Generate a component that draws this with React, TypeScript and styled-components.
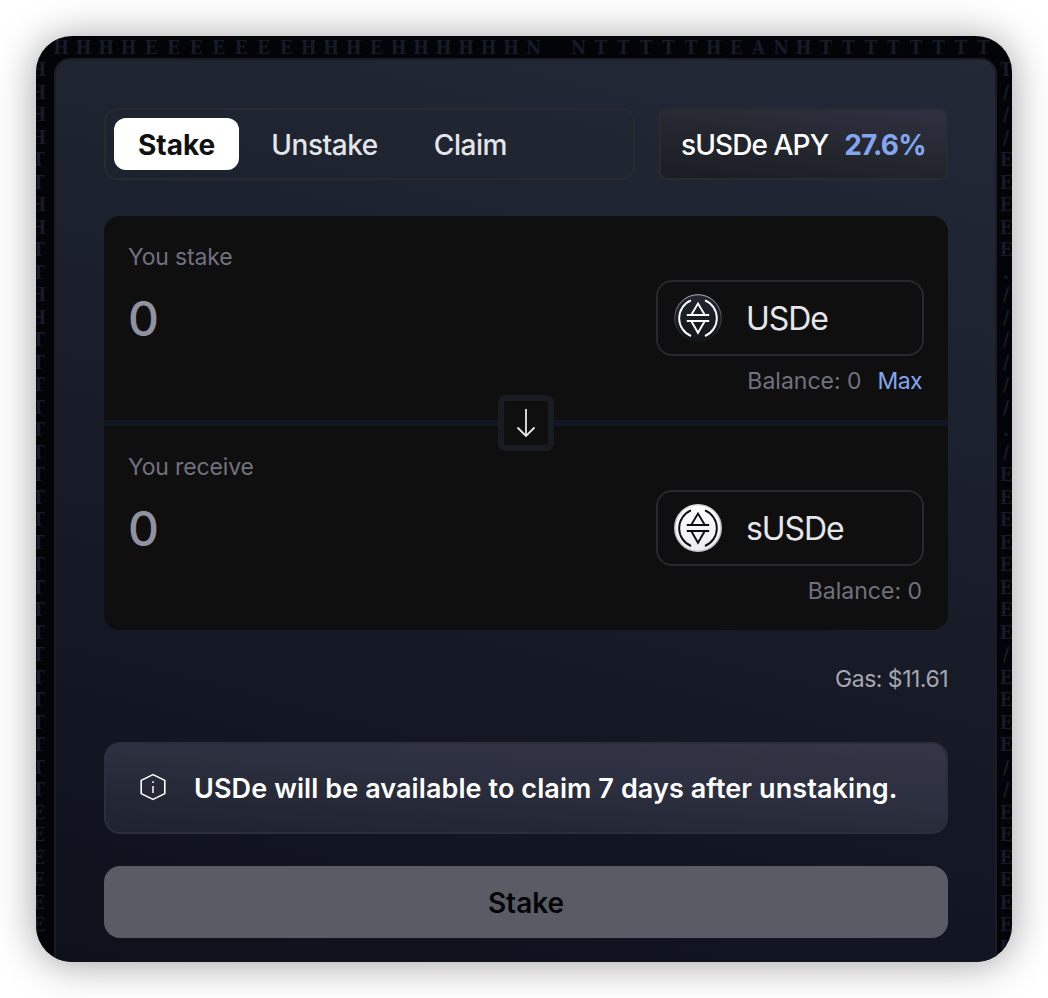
import styled, { createGlobalStyle, css } from "styled-components";

const GlobalStyle = createGlobalStyle`
  * {
    box-sizing: border-box;
  }
  body {
    margin: 0;
    background: #ffffff;
    font-family: Inter, "Liberation Sans", sans-serif;
  }
  button {
    font-family: inherit;
    border: none;
    background: none;
    padding: 0;
    cursor: pointer;
  }
`;

const Page = styled.div`
  width: 1048px;
  height: 998px;
  padding: 36px;
  overflow: hidden;
`;

const Frame = styled.div`
  display: grid;
  grid-template-columns: 18px 943px 15px;
  grid-template-rows: 22px 904px;
  width: 976px;
  height: 926px;
  border-radius: 36px;
  overflow: hidden;
  background: #030407;
  box-shadow: 0 2px 40px rgba(0, 0, 0, 0.38);
`;

const GlyphStrip = styled.div<{
  $vertical?: boolean;
  $start: number;
}>`
  display: flex;
  overflow: hidden;
  ${({ $vertical, $start }) =>
    $vertical
      ? css`
          flex-direction: column;
          padding-top: 1px;
          & > span {
            margin-left: ${$start}px;
          }
        `
      : css`
          grid-column: 1 / -1;
          padding-top: 1px;
          padding-left: ${$start}px;
        `}
`;

const Glyph = styled.span`
  flex: none;
  width: 22.5px;
  height: 22.5px;
  font-family: "DejaVu Serif Condensed", "DejaVu Serif", serif;
  font-stretch: condensed;
  font-weight: 700;
  font-size: 18.5px;
  line-height: 22.5px;
  text-align: center;
  color: #171b29;
  white-space: pre;
`;

const Panel = styled.main`
  display: flex;
  flex-direction: column;
  padding: 48px 47px 0 48px;
  border: 2px solid #1b1d22;
  border-bottom: none;
  border-radius: 16px 16px 0 0;
  background: linear-gradient(
    194deg,
    #242938 0%,
    #1e2430 22%,
    #181d29 48%,
    #131723 74%,
    #0e111c 100%
  );
`;

const Header = styled.div`
  display: flex;
  gap: 24px;
  height: 72px;
`;

const Tabs = styled.div`
  display: flex;
  align-items: center;
  gap: 8px;
  width: 531px;
  padding: 0 8px;
  border: 2px solid #292a2e;
  border-radius: 14px;
`;

const Tab = styled.button<{ $active?: boolean }>`
  height: 52px;
  padding: 1px 24px 0;
  border-radius: 12px;
  font-size: 28px;
  font-weight: 500;
  letter-spacing: -0.45px;
  color: #e4e5e9;
  ${({ $active }) =>
    $active &&
    css`
      background: #ffffff;
      color: #101010;
      font-weight: 700;
      letter-spacing: 0;
    `}
`;

const Apy = styled.div`
  display: flex;
  align-items: center;
  justify-content: space-between;
  width: 289px;
  padding: 1px 20px 0;
  border: 2px solid #2a2b2f;
  border-radius: 8px;
  background: linear-gradient(188deg, #2f3142 0%, #25272f 50%, #1a1d24 100%);
  font-size: 28px;
  font-weight: 500;
  letter-spacing: -0.9px;
  color: #ffffff;
`;

const ApyValue = styled.span`
  font-weight: 700;
  letter-spacing: -0.75px;
  color: #84a5f0;
`;

const Swap = styled.section`
  position: relative;
  display: flex;
  flex-direction: column;
  gap: 6px;
  margin-top: 36px;
  border-radius: 16px;
  overflow: hidden;
  background: #121522;
`;

const TokenCard = styled.div`
  display: flex;
  justify-content: space-between;
  height: 204px;
  padding: 24px;
  background: #0f0f0f;
`;

const AmountColumn = styled.div`
  display: flex;
  flex-direction: column;
`;

const Label = styled.span`
  font-size: 23px;
  line-height: 34px;
  letter-spacing: -0.15px;
  color: #71717f;
`;

const Amount = styled.span`
  margin-top: 17px;
  font-size: 48px;
  font-weight: 500;
  line-height: 56px;
  color: #9092a0;
`;

const TokenColumn = styled.div`
  display: flex;
  flex-direction: column;
  width: 268px;
  padding-top: 40px;
`;

const TokenSelect = styled.div`
  display: flex;
  flex: none;
  align-items: center;
  gap: 24px;
  height: 76px;
  padding: 0 16px;
  border: 2px solid #28282f;
  border-radius: 16px;
  font-size: 32px;
  letter-spacing: -1.1px;
  color: #e6e6ea;
`;

const Balance = styled.div`
  display: flex;
  flex: none;
  justify-content: flex-end;
  gap: 16px;
  margin-top: 8px;
  padding-right: 2px;
  font-size: 23px;
  line-height: 34px;
  color: #71717f;
`;

const MaxButton = styled.button`
  font-size: 23px;
  letter-spacing: -0.6px;
  color: #84a5f0;
`;

const SwapArrow = styled.div`
  position: absolute;
  left: 394px;
  top: 179px;
  display: flex;
  align-items: center;
  justify-content: center;
  width: 56px;
  height: 56px;
  border: 6px solid #191c22;
  border-radius: 8px;
  background: #0f0f0f;
`;

const Gas = styled.div`
  margin-top: 32px;
  font-size: 23px;
  line-height: 34px;
  letter-spacing: -0.5px;
  text-align: right;
  color: #a6a7ae;
`;

const Notice = styled.div`
  display: flex;
  align-items: center;
  gap: 27px;
  height: 92px;
  margin-top: 46px;
  padding-left: 33px;
  border: 2px solid #2b2e3b;
  border-radius: 16px;
  background: linear-gradient(184deg, #343546 0%, #2d3040 40%, #1e232e 100%);
  font-size: 27px;
  font-weight: 600;
  letter-spacing: 0.09px;
  white-space: nowrap;
  color: #ffffff;

  svg {
    margin-bottom: 2px;
  }
`;

const SubmitButton = styled.button`
  height: 72px;
  margin-top: 32px;
  padding-top: 1px;
  border-radius: 16px;
  background: #5a5c65;
  font-size: 28px;
  font-weight: 600;
  color: #050506;
`;

const TOP_GLYPHS = "HHHHEEEEEEEHHHEHHHHHHN NTTTTTHEANHTTTTTTTT";
const LEFT_GLYPHS = "HHHHTTHHTTHHTTTTTTTTTTTTTTTTTTTTTEEEEEE";
const RIGHT_GLYPHS = "T///EEEEE.//////./EEEEEEEE/EEEE//EEEEEEE";

const glyphs = (text: string) =>
  text.split("").map((char, index) => <Glyph key={index}>{char}</Glyph>);

const TokenIcon = ({ light }: { light?: boolean }) => {
  const stroke = light ? "#0d0d12" : "#ffffff";
  const id = light ? "coin-light" : "coin-dark";
  return (
    <svg width="48" height="48" viewBox="0 0 48 48" fill="none">
      <defs>
        <linearGradient id={id} x1="0" y1="0" x2="0" y2="1">
          <stop offset="0" stopColor={light ? "#ffffff" : "#23252f"} />
          <stop offset="1" stopColor={light ? "#ececf0" : "#12151a"} />
        </linearGradient>
        <linearGradient id={`${id}-rim`} x1="0" y1="0" x2="0" y2="1">
          <stop offset="0" stopColor={light ? "#d8d8de" : "#b4b5c2"} />
          <stop offset="0.5" stopColor={light ? "#b8b8c0" : "#4a4b55"} />
          <stop offset="1" stopColor={light ? "#c4c4cc" : "#12151a"} />
        </linearGradient>
      </defs>
      <circle
        cx="24"
        cy="24"
        r="23.3"
        fill={`url(#${id})`}
        stroke={`url(#${id}-rim)`}
        strokeWidth={light ? 1.4 : 1}
      />
      <g stroke={stroke} strokeWidth="1.9">
        <path d="M17 6.4A19.3 19.3 0 0 0 17 42M31 6.4A19.3 19.3 0 0 1 31 42" />
        <path d="M12.8 21H35.2M12.8 27H35.2" />
        <path d="M17.2 21L24 9.6L30.8 21M17.2 27L24 38.8L30.8 27" />
      </g>
    </svg>
  );
};

const App = () => (
  <>
    <GlobalStyle />
    <Page>
      <Frame>
        <GlyphStrip $start={13.75}>{glyphs(TOP_GLYPHS)}</GlyphStrip>
        <GlyphStrip $vertical $start={-8.8}>
          {glyphs(LEFT_GLYPHS)}
        </GlyphStrip>
        <Panel>
          <Header>
            <Tabs>
              <Tab $active>Stake</Tab>
              <Tab>Unstake</Tab>
              <Tab>Claim</Tab>
            </Tabs>
            <Apy>
              <span>sUSDe APY</span>
              <ApyValue>27.6%</ApyValue>
            </Apy>
          </Header>

          <Swap>
            <TokenCard>
              <AmountColumn>
                <Label>You stake</Label>
                <Amount>0</Amount>
              </AmountColumn>
              <TokenColumn>
                <TokenSelect>
                  <TokenIcon />
                  <span>USDe</span>
                </TokenSelect>
                <Balance>
                  <span>Balance: 0</span>
                  <MaxButton>Max</MaxButton>
                </Balance>
              </TokenColumn>
            </TokenCard>
            <TokenCard>
              <AmountColumn>
                <Label>You receive</Label>
                <Amount>0</Amount>
              </AmountColumn>
              <TokenColumn>
                <TokenSelect>
                  <TokenIcon light />
                  <span>sUSDe</span>
                </TokenSelect>
                <Balance>
                  <span>Balance: 0</span>
                </Balance>
              </TokenColumn>
            </TokenCard>
            <SwapArrow>
              <svg width="20" height="30" viewBox="0 0 20 30" fill="none">
                <path
                  d="M10 1V28M1.5 19.5L10 28L18.5 19.5"
                  stroke="#e6e6ea"
                  strokeWidth="1.8"
                />
              </svg>
            </SwapArrow>
          </Swap>

          <Gas>Gas: $11.61</Gas>

          <Notice>
            <svg width="28" height="28" viewBox="0 0 28 28" fill="none">
              <path
                d="M14 1.6L25.8 7.4V20.6L14 26.4L2.2 20.6V7.4Z"
                stroke="#ffffff"
                strokeWidth="1.6"
                strokeLinejoin="round"
              />
              <path d="M14 8.2V10M14 13V20" stroke="#ffffff" strokeWidth="1.5" />
            </svg>
            <span>USDe will be available to claim 7 days after unstaking.</span>
          </Notice>

          <SubmitButton>Stake</SubmitButton>
        </Panel>
        <GlyphStrip $vertical $start={-2.25}>
          {glyphs(RIGHT_GLYPHS)}
        </GlyphStrip>
      </Frame>
    </Page>
  </>
);

export default App;
